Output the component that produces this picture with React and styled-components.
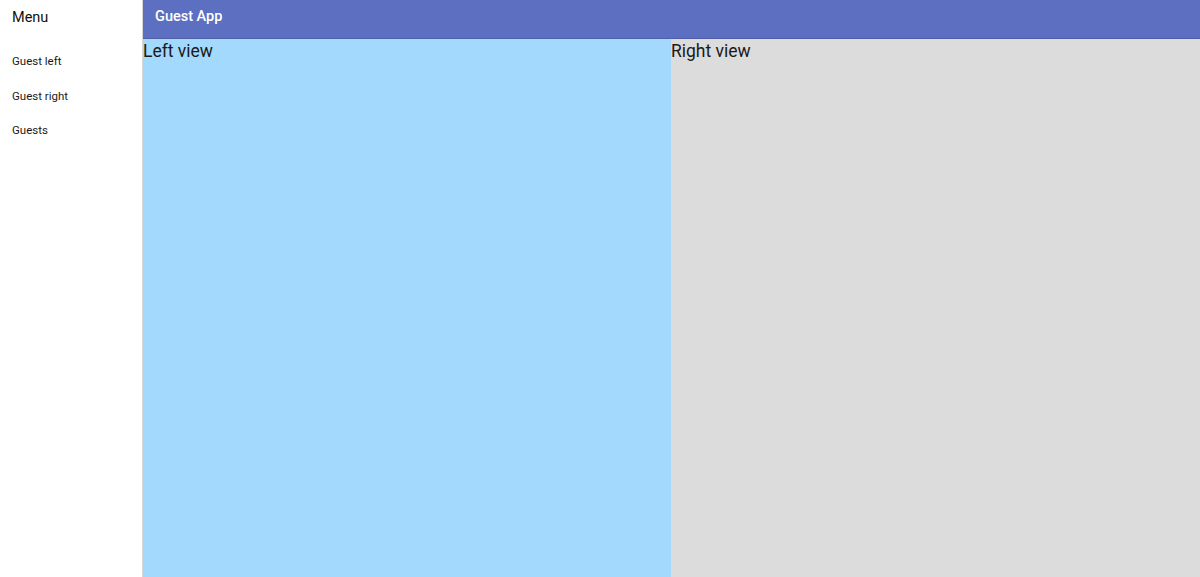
import React from "react";
import styled, { createGlobalStyle } from "styled-components";

const Global = createGlobalStyle`
  html, body, #root {
    margin: 0;
    height: 100%;
  }
  body {
    font-family: Roboto, "Liberation Sans", sans-serif;
    color: #111;
  }
`;

const Shell = styled.div`
  display: flex;
  height: 577px;
  overflow: hidden;
`;

const Sidebar = styled.nav`
  width: 142px;
  flex-shrink: 0;
  border-right: 1px solid #d6d6d6;
  background: #fff;
`;

const SideTitle = styled.div`
  height: 38px;
  box-sizing: border-box;
  padding: 0 0 4px 12px;
  display: flex;
  align-items: center;
  font-size: 14.5px;
  margin-bottom: 6px;
`;

const NavItem = styled.a`
  display: flex;
  align-items: center;
  height: 34.5px;
  padding-left: 12px;
  font-size: 11.5px;
  color: #1a1a1a;
  text-decoration: none;
`;

const Main = styled.div`
  flex: 1;
  display: flex;
  flex-direction: column;
`;

const Toolbar = styled.header`
  height: 39px;
  box-sizing: border-box;
  flex-shrink: 0;
  background: #5c6fc1;
  border-bottom: 1px solid #4f5fa8;
  display: flex;
  align-items: center;
  padding: 0 0 5px 12px;
  color: #fff;
  font-size: 14.5px;
  font-weight: 500;
`;

const Views = styled.div`
  flex: 1;
  display: grid;
  grid-template-columns: 528px 1fr;
`;

const View = styled.section`
  background: ${(p) => p.bg};
  font-size: 17.5px;
  line-height: 22px;
  padding-top: 1px;
  color: #1a1a1a;
`;

const links = ["Guest left", "Guest right", "Guests"];

export default function App() {
  return (
    <>
      <Global />
      <Shell>
        <Sidebar>
          <SideTitle>Menu</SideTitle>
          {links.map((l) => (
            <NavItem key={l} href="#">
              {l}
            </NavItem>
          ))}
        </Sidebar>
        <Main>
          <Toolbar>Guest App</Toolbar>
          <Views>
            <View bg="#a3d9fd">Left view</View>
            <View bg="#dcdcdc">Right view</View>
          </Views>
        </Main>
      </Shell>
    </>
  );
}
